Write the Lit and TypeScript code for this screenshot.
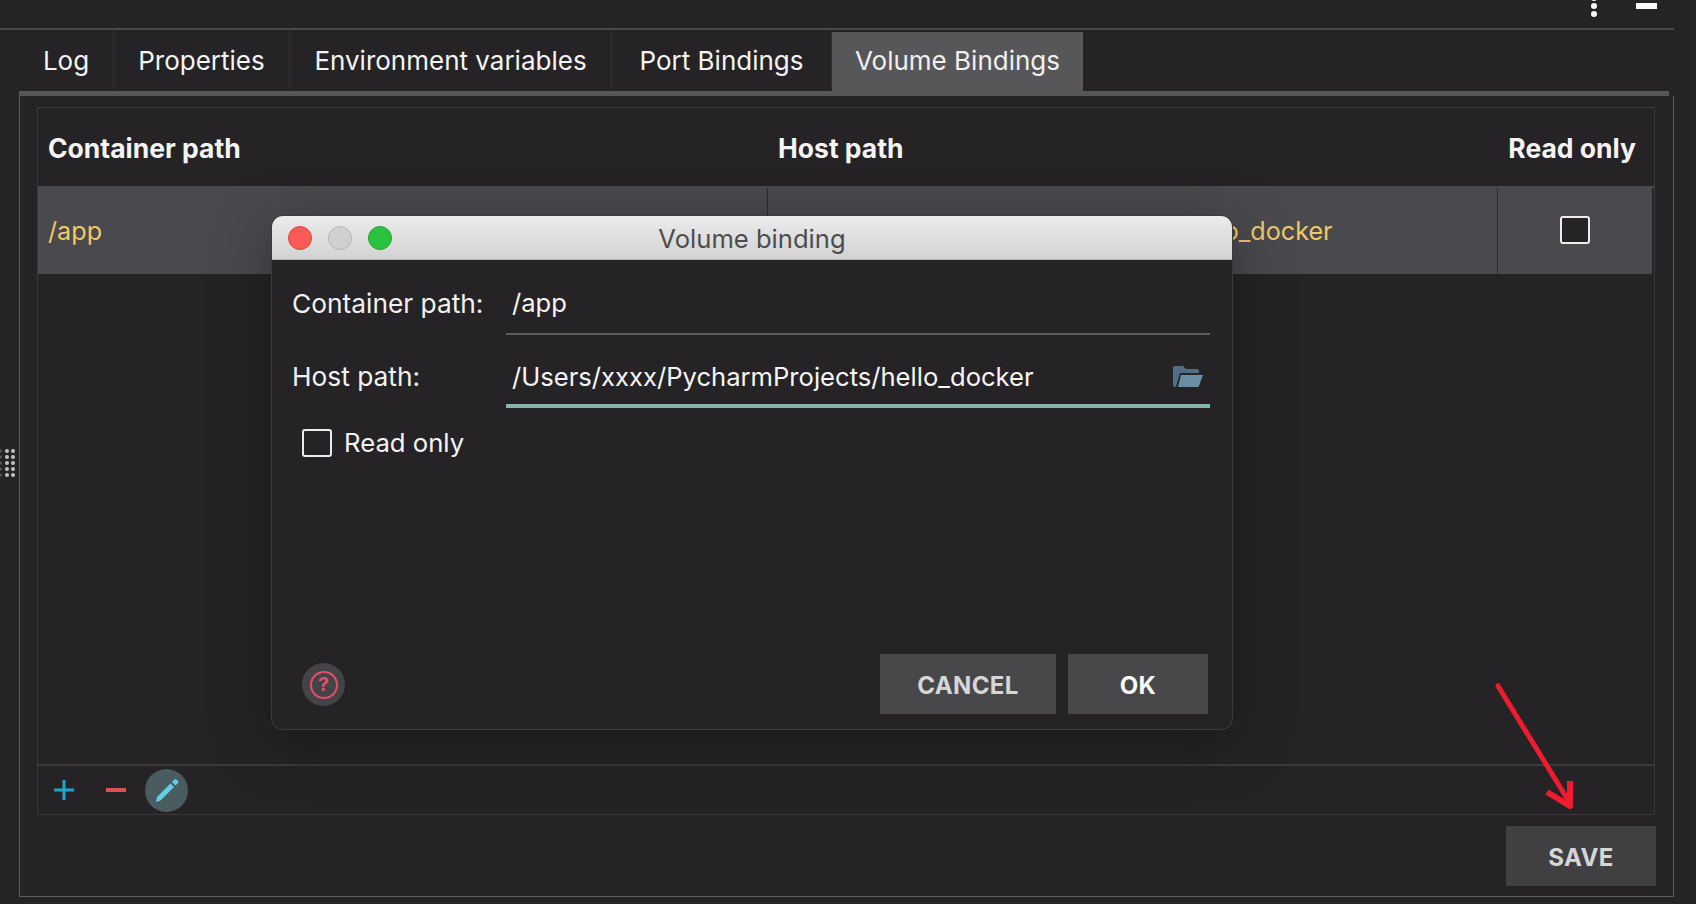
import { LitElement, html, css, svg } from "lit";
import { customElement } from "lit/decorators.js";

const dots = [451, 457, 463, 469, 475];

@customElement("app-root")
export class AppRoot extends LitElement {
  static styles = css`
    :host {
      display: block;
      position: relative;
      width: 1696px;
      height: 904px;
      overflow: hidden;
      background: #252326;
      color: #f4f4f4;
      font-family: Inter, Roboto, "Liberation Sans", sans-serif;
    }
    .top {
      height: 28px;
      margin-right: 22px;
      border-bottom: 2px solid #48474a;
      position: relative;
    }
    .kebab { position: absolute; left: 1589px; top: -4px; }
    .minimize {
      position: absolute;
      left: 1636px;
      top: 3px;
      width: 21px;
      height: 6px;
      background: #fafafa;
    }
    .panel {
      margin-left: 19px;
      margin-right: 22px;
      height: 867px;
      display: flex;
      flex-direction: column;
      border-bottom: 1px solid #5a595c;
      box-sizing: border-box;
    }
    .tabs {
      display: flex;
      height: 61px;
      flex: none;
    }
    .tab {
      display: flex;
      align-items: center;
      justify-content: center;
      font-size: 26px;
      border-right: 1px solid #302f33;
      box-sizing: border-box;
      height: 61px;
    }
    .tab.active {
      height: 64px;
      margin-top: 2px;
      padding-bottom: 7px;
      background: #575659;
      border: 0;
      color: #f0f0f0;
    }
    .bar {
      height: 5px;
      flex: none;
      margin-right: 5px;
      background: #575659;
    }
    .body {
      flex: 1;
      display: flex;
      flex-direction: column;
      min-height: 0;
      border-left: 1px solid #5a595c;
      border-right: 1px solid #5a595c;
      padding: 11px 17px 11px 17px;
    }
    .table {
      height: 708px;
      flex: none;
      display: flex;
      flex-direction: column;
      border: 1px solid #3a393c;
      margin-right: 1px;
      box-sizing: border-box;
    }
    .head {
      display: grid;
      grid-template-columns: 730px 1fr auto;
      align-items: center;
      height: 80px;
      flex: none;
      font-size: 26.500px;
      font-weight: 700;
      padding: 1px 18px 0 10px;
      box-sizing: border-box;
      border-bottom: 2px solid #4a494c;
    }
    .row {
      display: grid;
      grid-template-columns: 730px 730px 155px;
      height: 86px;
      flex: none;
      background: #4a494d;
      color: #efc868;
      font-size: 25.200px;
      margin-right: 2px;
    }
    .cell {
      display: flex;
      align-items: center;
      padding-left: 10px;
      white-space: nowrap;
      overflow: hidden;
      border-right: 1px solid #2c2b2e;
    }
    .cell:last-child { border: 0; padding: 0; justify-content: center; }
    .cb {
      width: 30px;
      height: 28px;
      box-sizing: border-box;
      border: 2px solid #ececec;
      border-radius: 3px;
      background: #252326;
      margin-right: 2px;
      margin-top: -2px;
    }
    .spacer { flex: 1; }
    .tools {
      height: 50px;
      flex: none;
      border-top: 2px solid #3a393c;
      display: flex;
      align-items: center;
      box-sizing: border-box;
      padding-left: 15px;
      gap: 18px;
    }
    .tools svg { display: block; }
    .pencil {
      width: 43px;
      height: 43px;
      border-radius: 50%;
      background: #4a5c60;
      display: flex;
      align-items: center;
      justify-content: center;
    }
    .foot {
      display: flex;
      justify-content: flex-end;
      margin-top: 11px;
    }
    .btn {
      display: flex;
      align-items: center;
      justify-content: center;
      height: 60px;
      padding-top: 3px;
      box-sizing: border-box;
      background: #48474a;
      font-size: 24px;
      font-weight: 700;
      letter-spacing: 0.4px;
      color: #d6d6d6;
    }
    .save { width: 150px; background: #403f42; }
    .cancel { width: 176px; }
    .ok { width: 140px; color: #fafafa; }

    .dialog {
      position: absolute;
      left: 272px;
      top: 216px;
      width: 960px;
      height: 513px;
      display: flex;
      flex-direction: column;
      background: #252326;
      border-radius: 11px;
      box-shadow: 0 0 0 1px #3c3b3e, 0 12px 60px rgba(0, 0, 0, 0.35);
      overflow: hidden;
    }
    .titlebar {
      height: 44px;
      flex: none;
      display: flex;
      align-items: center;
      position: relative;
      background: linear-gradient(#ebebeb, #d3d3d3);
      border-bottom: 1px solid #b5b5b5;
      box-sizing: border-box;
      padding-left: 16px;
      gap: 16px;
    }
    .light {
      width: 24px;
      height: 24px;
      border-radius: 50%;
      box-sizing: border-box;
    }
    .red { background: #fc5b57; border: 1px solid #e0443e; }
    .gray { background: #d0d0d0; border: 1px solid #b5b5b5; }
    .green { background: #2ac33f; border: 1px solid #1fa72f; }
    .title {
      position: absolute;
      left: 0;
      right: 0;
      text-align: center;
      color: #4d4d4d;
      font-size: 25.600px;
      padding-top: 1px;
    }
    .content {
      flex: 1;
      display: flex;
      flex-direction: column;
      padding: 0 22px 15px 20px;
      min-height: 0;
    }
    .field {
      display: grid;
      grid-template-columns: 214px 1fr;
      align-items: stretch;
    }
    .lbl {
      font-size: 26.300px;
      white-space: nowrap;
      display: flex;
      align-items: center;
      color: #f2f2f2;
    }
    .inp {
      display: flex;
      align-items: center;
      justify-content: space-between;
      font-size: 25.600px;
      padding: 0 7px 0 6px;
      box-sizing: border-box;
      color: #f6f6f6;
    }
    .f1 { height: 75px; }
    .f1 .inp { border-bottom: 2px solid #5c5b5e; padding-top: 12px; }
    .f1 .lbl { padding-top: 12px; }
    .f2 { height: 73px; }
    .f2 .inp { border-bottom: 4px solid #7fb9ae; padding-top: 14px; }
    .f2 .lbl { padding-top: 10px; }
    .ro {
      display: flex;
      align-items: center;
      gap: 12px;
      margin: 19px 0 0 10px;
      font-size: 25.700px;
    }
    .ro .cb { margin: 0; }
    .actions {
      margin-top: auto;
      display: flex;
      align-items: center;
      padding-right: 2px;
    }
    .help {
      width: 43px;
      height: 43px;
      border-radius: 50%;
      background: #444447;
      display: flex;
      align-items: center;
      justify-content: center;
      margin-left: 10px;
      margin-right: auto;
      margin-top: 1px;
    }
    .ring {
      width: 28px;
      height: 28px;
      border-radius: 50%;
      border: 2px solid #e2506c;
      box-sizing: border-box;
      display: flex;
      align-items: center;
      justify-content: center;
      color: #e2506c;
      font-size: 19px;
      font-weight: 700;
      line-height: 1;
    }
    .gap { width: 12px; }
    .overlay { position: absolute; left: 0; top: 0; pointer-events: none; }
  `;

  render() {
    return html`
      <div class="top">
        <svg class="kebab" width="10" height="24" viewBox="0 0 10 24">
          <circle cx="5" cy="2" r="3" fill="#fafafa"></circle>
          <circle cx="5" cy="10" r="3" fill="#fafafa"></circle>
          <circle cx="5" cy="18" r="3" fill="#fafafa"></circle>
        </svg>
        <div class="minimize"></div>
      </div>
      <div class="panel">
        <div class="tabs">
          <div class="tab" style="width:95px">Log</div>
          <div class="tab" style="width:176px">Properties</div>
          <div class="tab" style="width:322px">Environment variables</div>
          <div class="tab" style="width:220px">Port Bindings</div>
          <div class="tab active" style="width:251px">Volume Bindings</div>
        </div>
        <div class="bar"></div>
        <div class="body">
          <div class="table">
            <div class="head">
              <span>Container path</span>
              <span>Host path</span>
              <span>Read only</span>
            </div>
            <div class="row">
              <div class="cell">/app</div>
              <div class="cell">/Users/xxxxxxx/PycharmProjects/hello_docker</div>
              <div class="cell"><div class="cb"></div></div>
            </div>
            <div class="spacer"></div>
            <div class="tools">
              <svg width="22" height="22" viewBox="0 0 22 22">
                <path d="M11 1v20M1 11h20" stroke="#1ea7c9" stroke-width="3" fill="none"></path>
              </svg>
              <svg width="22" height="22" viewBox="0 0 22 22" style="margin-left:12px">
                <path d="M1 11h20" stroke="#d9534f" stroke-width="4" fill="none"></path>
              </svg>
              <div class="pencil">
                <svg width="28" height="28" viewBox="0 0 28 28">
                  <path d="M3 26l1-5L17.500 7.500l3.500 3.500L7.500 24.500z" fill="#62d0e8"></path>
                  <path d="M19 6l2.500-2.500a1.500 1.500 0 0 1 2 0l1.500 1.500a1.500 1.500 0 0 1 0 2L22.500 9.500z" fill="#62d0e8"></path>
                </svg>
              </div>
            </div>
          </div>
          <div class="foot"><div class="btn save">SAVE</div></div>
        </div>
      </div>

      <svg class="overlay" width="1696" height="904" viewBox="0 0 1696 904">
        ${dots.map(
          (y) => svg`
            <circle cx="7" cy=${y} r="2" fill="#c0c0c0"></circle>
            <circle cx="13" cy=${y} r="2" fill="#c0c0c0"></circle>
            <circle cx="0.500" cy=${y} r="1.500" fill="#5a595c"></circle>
          `
        )}
        <path d="M1498 686L1568 800" stroke="#ee1c2e" stroke-width="5" stroke-linecap="round" fill="none"></path>
        <path d="M1547 792L1570 806L1570 781" stroke="#ee1c2e" stroke-width="6" fill="none" stroke-linejoin="round"></path>
      </svg>

      <div class="dialog">
        <div class="titlebar">
          <div class="light red"></div>
          <div class="light gray"></div>
          <div class="light green"></div>
          <div class="title">Volume binding</div>
        </div>
        <div class="content">
          <div class="field f1">
            <div class="lbl">Container path:</div>
            <div class="inp">/app</div>
          </div>
          <div class="field f2">
            <div class="lbl">Host path:</div>
            <div class="inp">
              <span>/Users/xxxx/PycharmProjects/hello_docker</span>
              <svg width="30" height="23" viewBox="0 0 30 23">
                <path d="M0 3a2 2 0 0 1 2-2h8l3 3h11a2 2 0 0 1 2 2v2H7L3 22H2a2 2 0 0 1-2-2z" fill="#4f6f86"></path>
                <path d="M8 10h22l-4 11a2 2 0 0 1-2 1H5z" fill="#6b8ea8"></path>
              </svg>
            </div>
          </div>
          <div class="ro"><div class="cb"></div><span>Read only</span></div>
          <div class="actions">
            <div class="help"><div class="ring">?</div></div>
            <div class="btn cancel">CANCEL</div>
            <div class="gap"></div>
            <div class="btn ok">OK</div>
          </div>
        </div>
      </div>
    `;
  }
}
